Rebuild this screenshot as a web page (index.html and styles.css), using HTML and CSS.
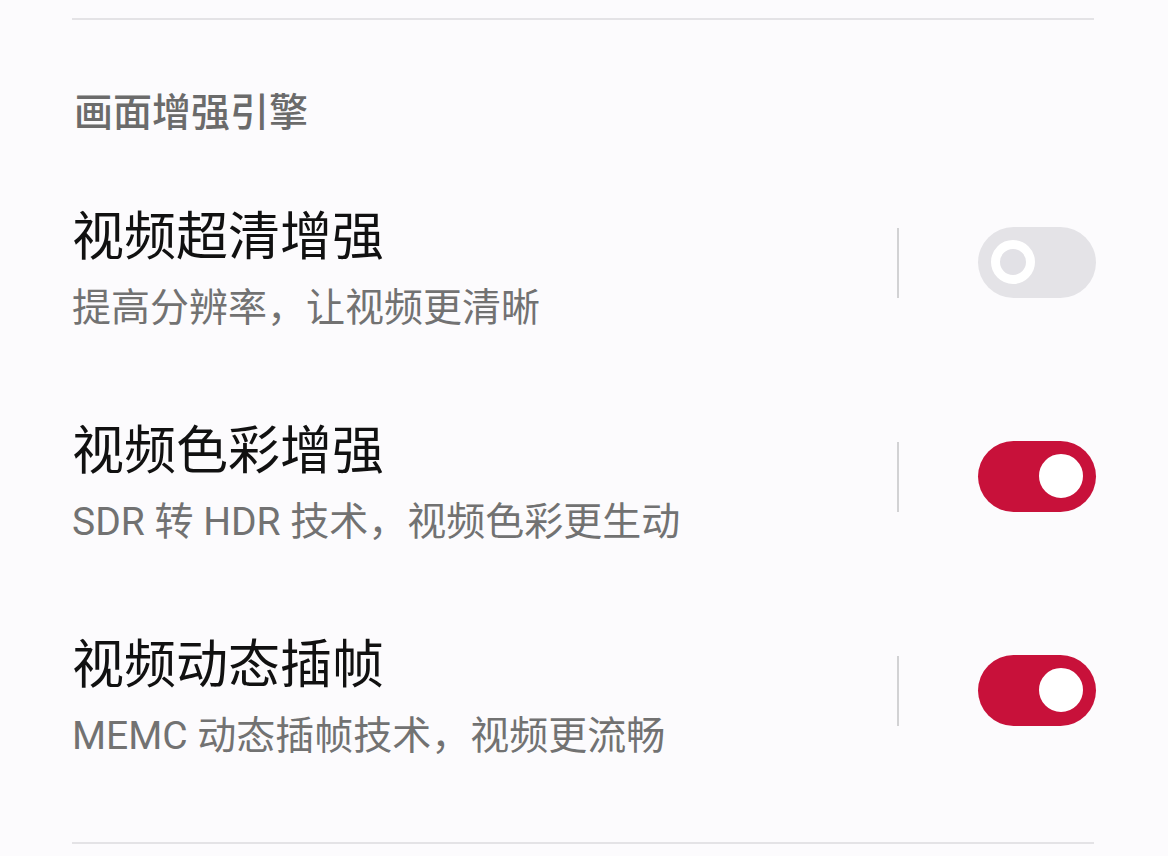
FILE: index.html
```html
<!DOCTYPE html>
<html lang="zh-CN">
<head>
    <meta charset="UTF-8">
    <meta name="viewport" content="width=device-width, initial-scale=1.0">
    <title>画面增强引擎</title>
    <link rel="stylesheet" href="styles.css">
</head>
<body>
    <div class="page">
        <div class="divider"></div>

        <!-- section -->
        <div class="section-title">画面增强引擎</div>

        <div class="setting-list">
            <div class="setting-row">
                <div class="setting-text">
                    <div class="setting-name">视频超清增强</div>
                    <div class="setting-desc">提高分辨率，让视频更清晰</div>
                </div>
                <div class="setting-control">
                    <span class="control-line"></span>
                    <span class="switch"></span>
                </div>
            </div>

            <div class="setting-row">
                <div class="setting-text">
                    <div class="setting-name">视频色彩增强</div>
                    <div class="setting-desc">SDR 转 HDR 技术，视频色彩更生动</div>
                </div>
                <div class="setting-control">
                    <span class="control-line"></span>
                    <span class="switch on"></span>
                </div>
            </div>

            <div class="setting-row">
                <div class="setting-text">
                    <div class="setting-name">视频动态插帧</div>
                    <div class="setting-desc">MEMC 动态插帧技术，视频更流畅</div>
                </div>
                <div class="setting-control">
                    <span class="control-line"></span>
                    <span class="switch on"></span>
                </div>
            </div>
        </div>

        <div class="divider bottom"></div>
    </div>
</body>
</html>
```

FILE: styles.css
```css
body {
    margin: 0;
    background: #fcfbfd;
    font-family: Roboto, "Noto Sans CJK SC", sans-serif;
    overflow: hidden;
}

.page {
    padding: 18px 72px 0 72px;
}

/* dividers */
.divider {
    height: 2px;
    background: #e4e3e6;
    margin-right: 2px;
}

.divider.bottom {
    margin-top: 80px;
}

/* section title */
.section-title {
    margin-top: 74px;
    padding-left: 2px;
    font-size: 39px;
    line-height: 39px;
    font-weight: 500;
    color: #6b6b6b;
}

/* rows */
.setting-list {
    margin-top: 75px;
    display: flex;
    flex-direction: column;
    gap: 88px;
}

.setting-row {
    display: flex;
    align-items: flex-start;
}

.setting-text {
    flex: 1;
}

.setting-name {
    font-size: 52px;
    line-height: 60px;
    color: #111;
}

.setting-desc {
    margin-top: 14px;
    font-size: 39px;
    line-height: 52px;
    color: #727272;
}

.setting-control {
    display: flex;
    align-items: center;
    gap: 79px;
    margin-top: 19px;
}

.control-line {
    width: 2px;
    height: 70px;
    background: #d2d2d4;
}

/* switch */
.switch {
    position: relative;
    width: 118px;
    height: 71px;
    border-radius: 36px;
    background: #e4e3e7;
}

.switch::after {
    content: "";
    position: absolute;
    left: 13px;
    top: 13px;
    width: 26px;
    height: 26px;
    border-radius: 50%;
    background: #e2e1e6;
    border: 9px solid #fff;
}

.switch.on {
    background: #c8113a;
}

.switch.on::after {
    left: auto;
    right: 13px;
    background: #fff;
}
```
